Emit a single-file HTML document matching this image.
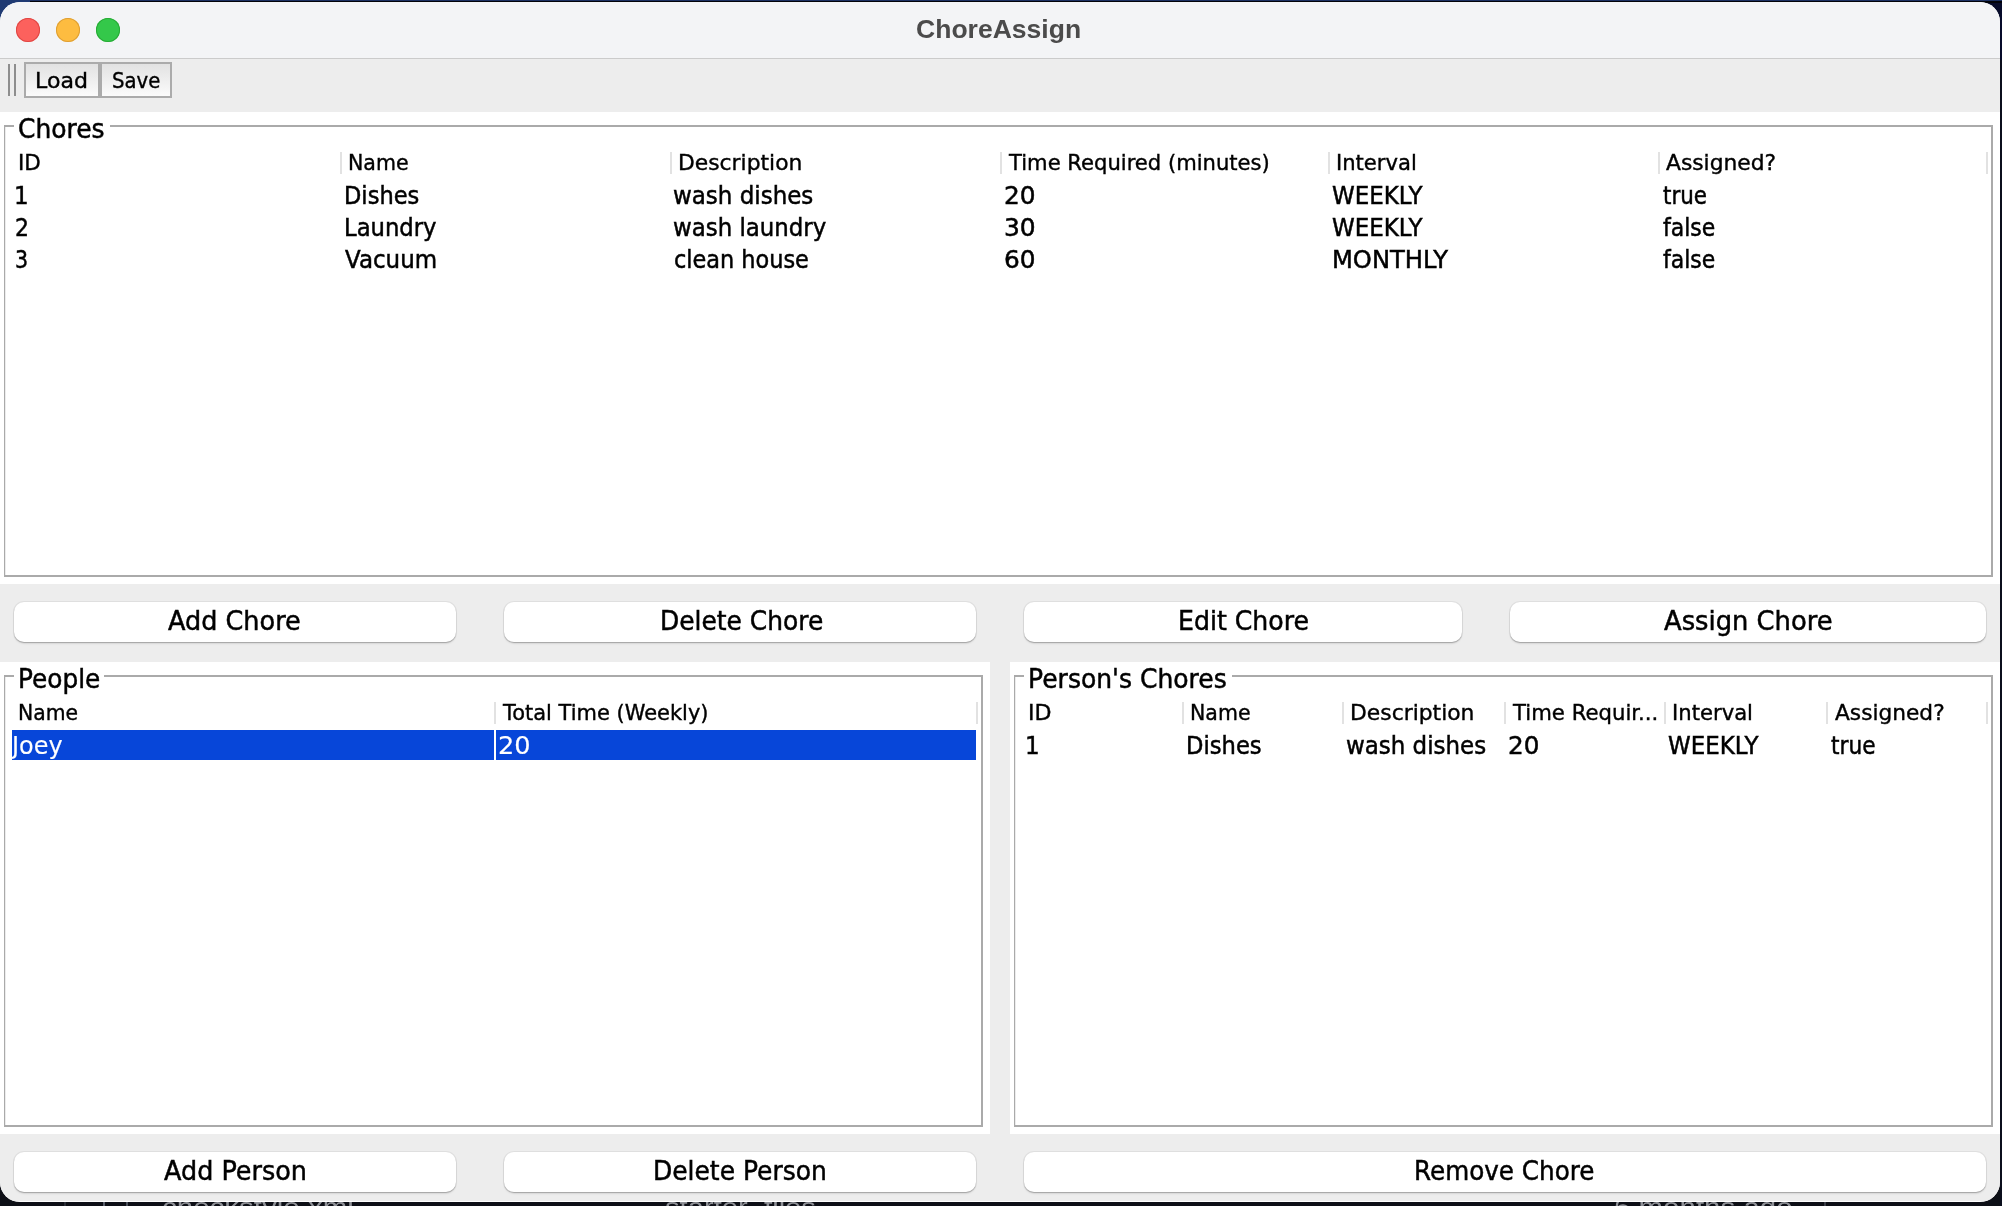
<!DOCTYPE html>
<html lang="en"><head><meta charset="utf-8"><title>ChoreAssign</title>
<style>
html,body{margin:0;padding:0}
body{width:2002px;height:1206px;position:relative;overflow:hidden;background:#0b1030;font-family:'DejaVu Sans','Liberation Sans',sans-serif}
#desk{position:absolute;left:0;top:0;width:2002px;height:1206px;overflow:hidden;background:#0d0f16}
#win{position:absolute;left:0;top:2px;width:2000px;height:1199.6px;border-radius:20px;overflow:hidden;background:#fff}
#in{position:absolute;left:0;top:-2px;width:2002px;height:1206px}
#in div,#desk div{position:absolute;box-sizing:border-box}
.t{position:absolute;white-space:nowrap;line-height:normal;transform-origin:0 0;color:#000}
#txt,#txtb{left:0;top:0;width:2002px;height:1206px;will-change:transform}
.tb{border:2px solid #ababab;background:linear-gradient(#e2e2e2,#fbfbfb)}
.grp{border:2px solid #a4a4a4}
.sep{background:#e2e2e2}
.btn{background:#fff;border-radius:10px;box-shadow:0 0 0 1px rgba(0,0,0,.055),0 1px 1px rgba(0,0,0,.2),0 1.5px 2px rgba(0,0,0,.08)}
</style></head>
<body>
<div id="desk">
<div style="left:0px;top:0px;width:2002px;height:1px;background:#1c3163"></div>
<div style="left:0px;top:1px;width:2002px;height:2px;background:#02030a"></div>
<div style="left:0px;top:0px;width:30px;height:40px;background:#1f3a73"></div>
<div style="left:1970px;top:3px;width:32px;height:57px;background:#070b2a"></div>
<div style="left:2000px;top:60px;width:2px;height:1146px;background:#0b0e1c"></div>
<div style="left:64px;top:1195px;width:2px;height:11px;background:#2a2d36"></div>
<div style="left:103px;top:1195px;width:2px;height:11px;background:#5a5f6b"></div>
<div style="left:126px;top:1195px;width:2px;height:11px;background:#4a4f5a"></div>
<div style="left:1824px;top:1195px;width:2px;height:11px;background:#3a3d46"></div>
<div id="txtb">
<span class="t" style="left:162.33px;top:1192.30px;font-size:26px;font-family:'Liberation Sans','DejaVu Sans',sans-serif;transform:scaleX(1.1344);color:#8f9197;">checkstyle.xml</span>
<span class="t" style="left:664.80px;top:1192.30px;font-size:26px;font-family:'Liberation Sans','DejaVu Sans',sans-serif;transform:scaleX(1.1235);color:#8f9197;">starter_files</span>
<span class="t" style="left:1613.84px;top:1192.30px;font-size:26px;font-family:'Liberation Sans','DejaVu Sans',sans-serif;transform:scaleX(1.1334);color:#8f9197;">6 months ago</span>
</div>
</div>
<div id="win"><div id="in">
<div style="left:0px;top:2px;width:2000px;height:56px;background:#f3f4f6"></div>
<div style="left:0px;top:58px;width:2000px;height:1px;background:#cbcbcb"></div>
<div style="left:0px;top:59px;width:2000px;height:53px;background:#ededed"></div>
<div style="left:16px;top:18px;width:24px;height:24px;background:#fc615d;border-radius:50%;box-shadow:inset 0 0 0 1px #df4744"></div>
<div style="left:56px;top:18px;width:24px;height:24px;background:#fdbc40;border-radius:50%;box-shadow:inset 0 0 0 1px #de9f34"></div>
<div style="left:96px;top:18px;width:24px;height:24px;background:#34c84a;border-radius:50%;box-shadow:inset 0 0 0 1px #27aa35"></div>
<div style="left:8px;top:64px;width:2px;height:32px;background:#8e8e8e"></div>
<div style="left:14px;top:64px;width:2px;height:32px;background:#8e8e8e"></div>
<div class="tb" style="left:24px;top:62px;width:76px;height:36px;"></div>
<div class="tb" style="left:100px;top:62px;width:72px;height:36px;"></div>
<div style="left:0px;top:112px;width:2000px;height:472px;background:#fff"></div>
<div style="left:0px;top:584px;width:2000px;height:78px;background:#ededed"></div>
<div style="left:0px;top:662px;width:990px;height:472px;background:#fff"></div>
<div style="left:990px;top:662px;width:20px;height:472px;background:#ededed"></div>
<div style="left:1010px;top:662px;width:990px;height:472px;background:#fff"></div>
<div style="left:0px;top:1134px;width:2000px;height:67px;background:#ededed"></div>
<div style="left:4px;top:125px;width:10px;height:2px;background:#aaaaaa"></div><div style="left:4px;top:125px;width:1px;height:452px;background:#aaaaaa"></div><div style="left:110px;top:125px;width:1883px;height:2px;background:#aaaaaa"></div><div style="left:4px;top:575px;width:1989px;height:2px;background:#aaaaaa"></div><div style="left:1991px;top:125px;width:2px;height:452px;background:#aaaaaa"></div><div style="left:4px;top:127px;width:2px;height:448px;background:linear-gradient(to right,#aaaaaa 0,#aaaaaa 1px,#ececec 1px,#ececec 2px)"></div>
<div style="left:4px;top:675px;width:10px;height:2px;background:#aaaaaa"></div><div style="left:4px;top:675px;width:1px;height:452px;background:#aaaaaa"></div><div style="left:104px;top:675px;width:879px;height:2px;background:#aaaaaa"></div><div style="left:4px;top:1125px;width:979px;height:2px;background:#aaaaaa"></div><div style="left:981px;top:675px;width:2px;height:452px;background:#aaaaaa"></div><div style="left:4px;top:677px;width:2px;height:448px;background:linear-gradient(to right,#aaaaaa 0,#aaaaaa 1px,#ececec 1px,#ececec 2px)"></div>
<div style="left:1014px;top:675px;width:10px;height:2px;background:#aaaaaa"></div><div style="left:1014px;top:675px;width:1px;height:452px;background:#aaaaaa"></div><div style="left:1232px;top:675px;width:761px;height:2px;background:#aaaaaa"></div><div style="left:1014px;top:1125px;width:979px;height:2px;background:#aaaaaa"></div><div style="left:1991px;top:675px;width:2px;height:452px;background:#aaaaaa"></div><div style="left:1014px;top:677px;width:2px;height:448px;background:linear-gradient(to right,#aaaaaa 0,#aaaaaa 1px,#ececec 1px,#ececec 2px)"></div>
<div class="sep" style="left:340px;top:152px;width:2px;height:22px;"></div>
<div class="sep" style="left:670px;top:152px;width:2px;height:22px;"></div>
<div class="sep" style="left:1000px;top:152px;width:2px;height:22px;"></div>
<div class="sep" style="left:1328px;top:152px;width:2px;height:22px;"></div>
<div class="sep" style="left:1658px;top:152px;width:2px;height:22px;"></div>
<div class="sep" style="left:1986px;top:152px;width:2px;height:22px;"></div>
<div class="sep" style="left:494px;top:702px;width:2px;height:22px;"></div>
<div class="sep" style="left:976px;top:702px;width:2px;height:22px;"></div>
<div class="sep" style="left:1182px;top:702px;width:2px;height:22px;"></div>
<div class="sep" style="left:1342px;top:702px;width:2px;height:22px;"></div>
<div class="sep" style="left:1504px;top:702px;width:2px;height:22px;"></div>
<div class="sep" style="left:1664px;top:702px;width:2px;height:22px;"></div>
<div class="sep" style="left:1826px;top:702px;width:2px;height:22px;"></div>
<div class="sep" style="left:1986px;top:702px;width:2px;height:22px;"></div>
<div style="left:12px;top:730px;width:482px;height:30px;background:#0746d9"></div>
<div style="left:496px;top:730px;width:480px;height:30px;background:#0746d9"></div>
<div class="btn" style="left:14px;top:602px;width:442px;height:40px;"></div>
<div class="btn" style="left:504px;top:602px;width:472px;height:40px;"></div>
<div class="btn" style="left:1024px;top:602px;width:438px;height:40px;"></div>
<div class="btn" style="left:1510px;top:602px;width:476px;height:40px;"></div>
<div class="btn" style="left:14px;top:1152px;width:442px;height:40px;"></div>
<div class="btn" style="left:504px;top:1152px;width:472px;height:40px;"></div>
<div class="btn" style="left:1024px;top:1152px;width:962px;height:40px;"></div>
<div id="txt">
<span class="t" style="left:916.08px;top:13.80px;font-size:26px;font-weight:700;font-family:'Liberation Sans','DejaVu Sans',sans-serif;transform:scaleX(1.0208);color:#4b4b4b;">ChoreAssign</span>
<span class="t" style="left:35.47px;top:68.00px;font-size:22px;-webkit-text-stroke:0.4px currentColor;transform:scaleX(1.0022);">Load</span>
<span class="t" style="left:111.63px;top:68.00px;font-size:22px;-webkit-text-stroke:0.4px currentColor;transform:scaleX(0.8946);">Save</span>
<span class="t" style="left:17.86px;top:114.00px;font-size:26px;-webkit-text-stroke:0.5px currentColor;transform:scaleX(0.9597);">Chores</span>
<span class="t" style="left:17.92px;top:150.00px;font-size:22px;-webkit-text-stroke:0.4px currentColor;transform:scaleX(0.9762);">ID</span>
<span class="t" style="left:347.71px;top:150.00px;font-size:22px;-webkit-text-stroke:0.4px currentColor;transform:scaleX(0.9337);">Name</span>
<span class="t" style="left:677.89px;top:150.00px;font-size:22px;-webkit-text-stroke:0.4px currentColor;transform:scaleX(0.9922);">Description</span>
<span class="t" style="left:1009.21px;top:150.00px;font-size:22px;-webkit-text-stroke:0.4px currentColor;transform:scaleX(0.9588);">Time Required (minutes)</span>
<span class="t" style="left:1335.76px;top:150.00px;font-size:22px;-webkit-text-stroke:0.4px currentColor;transform:scaleX(0.9589);">Interval</span>
<span class="t" style="left:1666.00px;top:150.00px;font-size:22px;-webkit-text-stroke:0.4px currentColor;transform:scaleX(0.9908);">Assigned?</span>
<span class="t" style="left:14.47px;top:182.00px;font-size:24px;-webkit-text-stroke:0.5px currentColor;transform:scaleX(0.9591);">1</span>
<span class="t" style="left:14.58px;top:214.00px;font-size:24px;-webkit-text-stroke:0.5px currentColor;transform:scaleX(0.9149);">2</span>
<span class="t" style="left:14.74px;top:246.00px;font-size:24px;-webkit-text-stroke:0.5px currentColor;transform:scaleX(0.8579);">3</span>
<span class="t" style="left:344.33px;top:182.00px;font-size:24px;-webkit-text-stroke:0.5px currentColor;transform:scaleX(0.9396);">Dishes</span>
<span class="t" style="left:344.32px;top:214.00px;font-size:24px;-webkit-text-stroke:0.5px currentColor;transform:scaleX(0.9463);">Laundry</span>
<span class="t" style="left:344.53px;top:246.00px;font-size:24px;-webkit-text-stroke:0.5px currentColor;transform:scaleX(0.9568);">Vacuum</span>
<span class="t" style="left:673.47px;top:182.00px;font-size:24px;-webkit-text-stroke:0.5px currentColor;transform:scaleX(0.9572);">wash dishes</span>
<span class="t" style="left:673.47px;top:214.00px;font-size:24px;-webkit-text-stroke:0.5px currentColor;transform:scaleX(0.9534);">wash laundry</span>
<span class="t" style="left:674.24px;top:246.00px;font-size:24px;-webkit-text-stroke:0.5px currentColor;transform:scaleX(0.9332);">clean house</span>
<span class="t" style="left:1004.22px;top:182.00px;font-size:24px;-webkit-text-stroke:0.5px currentColor;transform:scaleX(1.0334);">20</span>
<span class="t" style="left:1004.07px;top:214.00px;font-size:24px;-webkit-text-stroke:0.5px currentColor;transform:scaleX(1.0384);">30</span>
<span class="t" style="left:1004.26px;top:246.00px;font-size:24px;-webkit-text-stroke:0.5px currentColor;transform:scaleX(1.0320);">60</span>
<span class="t" style="left:1331.53px;top:182.00px;font-size:24px;-webkit-text-stroke:0.5px currentColor;transform:scaleX(0.9580);">WEEKLY</span>
<span class="t" style="left:1331.53px;top:214.00px;font-size:24px;-webkit-text-stroke:0.5px currentColor;transform:scaleX(0.9580);">WEEKLY</span>
<span class="t" style="left:1332.19px;top:246.00px;font-size:24px;-webkit-text-stroke:0.5px currentColor;transform:scaleX(1.0080);">MONTHLY</span>
<span class="t" style="left:1663.00px;top:182.00px;font-size:24px;-webkit-text-stroke:0.5px currentColor;transform:scaleX(0.8931);">true</span>
<span class="t" style="left:1663.04px;top:214.00px;font-size:24px;-webkit-text-stroke:0.5px currentColor;transform:scaleX(0.9145);">false</span>
<span class="t" style="left:1663.04px;top:246.00px;font-size:24px;-webkit-text-stroke:0.5px currentColor;transform:scaleX(0.9145);">false</span>
<span class="t" style="left:167.82px;top:606.00px;font-size:26px;-webkit-text-stroke:0.5px currentColor;transform:scaleX(0.9818);">Add Chore</span>
<span class="t" style="left:659.72px;top:606.00px;font-size:26px;-webkit-text-stroke:0.5px currentColor;transform:scaleX(0.9583);">Delete Chore</span>
<span class="t" style="left:1177.90px;top:606.00px;font-size:26px;-webkit-text-stroke:0.5px currentColor;transform:scaleX(0.9685);">Edit Chore</span>
<span class="t" style="left:1664.22px;top:606.00px;font-size:26px;-webkit-text-stroke:0.5px currentColor;transform:scaleX(0.9916);">Assign Chore</span>
<span class="t" style="left:17.80px;top:664.00px;font-size:26px;-webkit-text-stroke:0.5px currentColor;transform:scaleX(0.9523);">People</span>
<span class="t" style="left:1027.91px;top:664.00px;font-size:26px;-webkit-text-stroke:0.5px currentColor;transform:scaleX(0.9623);">Person's Chores</span>
<span class="t" style="left:18.00px;top:700.00px;font-size:22px;-webkit-text-stroke:0.4px currentColor;transform:scaleX(0.9244);">Name</span>
<span class="t" style="left:502.91px;top:700.00px;font-size:22px;-webkit-text-stroke:0.4px currentColor;transform:scaleX(0.9522);">Total Time (Weekly)</span>
<span class="t" style="left:1027.66px;top:700.00px;font-size:22px;-webkit-text-stroke:0.4px currentColor;transform:scaleX(1.0060);">ID</span>
<span class="t" style="left:1190.11px;top:700.00px;font-size:22px;-webkit-text-stroke:0.4px currentColor;transform:scaleX(0.9321);">Name</span>
<span class="t" style="left:1349.79px;top:700.00px;font-size:22px;-webkit-text-stroke:0.4px currentColor;transform:scaleX(0.9930);">Description</span>
<span class="t" style="left:1513.41px;top:700.00px;font-size:22px;-webkit-text-stroke:0.4px currentColor;transform:scaleX(0.9642);">Time Requir...</span>
<span class="t" style="left:1671.95px;top:700.00px;font-size:22px;-webkit-text-stroke:0.4px currentColor;transform:scaleX(0.9614);">Interval</span>
<span class="t" style="left:1834.50px;top:700.00px;font-size:22px;-webkit-text-stroke:0.4px currentColor;transform:scaleX(0.9863);">Assigned?</span>
<span class="t" style="left:12.28px;top:732.00px;font-size:24px;-webkit-text-stroke:0.15px currentColor;transform:scaleX(0.9967);color:#fff;">Joey</span>
<span class="t" style="left:497.75px;top:732.00px;font-size:24px;-webkit-text-stroke:0.15px currentColor;transform:scaleX(1.0664);color:#fff;">20</span>
<span class="t" style="left:1024.57px;top:732.00px;font-size:24px;-webkit-text-stroke:0.5px currentColor;transform:scaleX(0.9591);">1</span>
<span class="t" style="left:1185.93px;top:732.00px;font-size:24px;-webkit-text-stroke:0.5px currentColor;transform:scaleX(0.9435);">Dishes</span>
<span class="t" style="left:1345.57px;top:732.00px;font-size:24px;-webkit-text-stroke:0.5px currentColor;transform:scaleX(0.9558);">wash dishes</span>
<span class="t" style="left:1508.23px;top:732.00px;font-size:24px;-webkit-text-stroke:0.5px currentColor;transform:scaleX(1.0262);">20</span>
<span class="t" style="left:1667.83px;top:732.00px;font-size:24px;-webkit-text-stroke:0.5px currentColor;transform:scaleX(0.9559);">WEEKLY</span>
<span class="t" style="left:1830.80px;top:732.00px;font-size:24px;-webkit-text-stroke:0.5px currentColor;transform:scaleX(0.9035);">true</span>
<span class="t" style="left:164.22px;top:1156.00px;font-size:26px;-webkit-text-stroke:0.5px currentColor;transform:scaleX(0.9793);">Add Person</span>
<span class="t" style="left:653.42px;top:1156.00px;font-size:26px;-webkit-text-stroke:0.5px currentColor;transform:scaleX(0.9599);">Delete Person</span>
<span class="t" style="left:1414.14px;top:1156.00px;font-size:26px;-webkit-text-stroke:0.5px currentColor;transform:scaleX(0.9476);">Remove Chore</span>
</div>
</div></div>
</body></html>
